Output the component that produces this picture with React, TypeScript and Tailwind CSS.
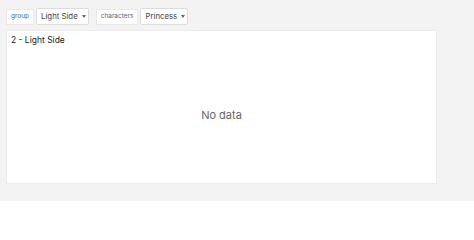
function Caret() {
  return <span className="ml-[4px] inline-block w-0 h-0 border-l-[2.5px] border-r-[2.5px] border-t-[3px] border-l-transparent border-r-transparent border-t-[#666]" />;
}

export default function App() {
  return (
    <div
      className="w-[474px] h-[201px] bg-[#f3f3f3] px-[6px] pt-[8px]"
      style={{ fontFamily: "Inter, 'Liberation Sans', sans-serif" }}
    >
      {/* filter row */}
      <div className="flex items-center h-[17px]">
        <span className="flex items-center h-[16px] px-[4px] bg-white border border-[#e8e8e8] text-[6.5px] text-[#4f6286]">
          group
        </span>
        <button className="ml-[2px] flex items-center h-[17px] pl-[4px] pr-[2px] bg-white border border-[#dcdcdc] rounded-[2px] text-[7.8px] text-[#444]">
          Light Side
          <Caret />
        </button>
        <span className="ml-[7px] flex items-center h-[16px] px-[4px] bg-white border border-[#e8e8e8] text-[6.5px] text-[#4f6286]">
          characters
        </span>
        <button className="ml-[2px] flex items-center h-[17px] pl-[4px] pr-[2px] bg-white border border-[#dcdcdc] rounded-[2px] text-[7.8px] text-[#444]">
          Princess
          <Caret />
        </button>
      </div>

      {/* panel */}
      <div className="mt-[5px] w-[431px] h-[154px] bg-white border border-[#ececec] flex flex-col">
        <div className="px-[4px] pt-[3px] text-[8.5px] text-[#222] h-[16px]">2 - Light Side</div>
        <div className="flex-1 flex items-center justify-center text-[11px] text-[#666]">No data</div>
      </div>
    </div>
  );
}
